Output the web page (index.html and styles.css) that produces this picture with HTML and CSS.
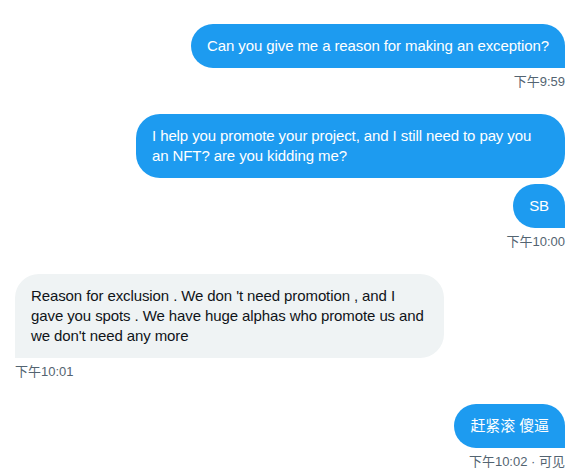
FILE: index.html
```html
<!DOCTYPE html>
<html lang="zh-CN">
<head>
<meta charset="utf-8">
<title>Messages</title>
<link rel="stylesheet" href="styles.css">
</head>
<body>
<div class="chat">
  <div class="group sent">
    <div class="bubble last">Can you give me a reason for making an exception?</div>
    <div class="time">下午9:59</div>
  </div>
  <div class="group sent">
    <div class="bubble">I help you promote your project, and I still need to pay you an NFT? are you kidding me?</div>
    <div class="bubble last">SB</div>
    <div class="time">下午10:00</div>
  </div>
  <div class="group received">
    <div class="bubble last">Reason for exclusion . We don 't need promotion , and I gave you spots . We have huge alphas who promote us and we don't need any more</div>
    <div class="time">下午10:01</div>
  </div>
  <div class="group sent">
    <div class="bubble last">赶紧滚 傻逼</div>
    <div class="time">下午10:02 · 可见</div>
  </div>
</div>
</body>
</html>
```
FILE: styles.css
```css
html, body {
  margin: 0;
  padding: 0;
  background: #ffffff;
}
body {
  font-family: "Liberation Sans", "Noto Sans CJK SC", Arial, sans-serif;
}
.chat {
  display: flex;
  flex-direction: column;
  padding: 24px 13px 0 15px;
}
.group {
  display: flex;
  flex-direction: column;
  gap: 6px;
  padding-bottom: 24px;
}
.group.sent {
  align-items: flex-end;
}
.group.received {
  align-items: flex-start;
}
.bubble {
  max-width: 397px;
  padding: 12px 16px;
  border-radius: 24px;
  font-size: 15px;
  line-height: 20px;
  box-sizing: content-box;
}
.sent .bubble {
  background: #1d9bf0;
  color: #ffffff;
  letter-spacing: -0.1px;
}
.sent .bubble.last {
  border-bottom-right-radius: 0;
}
.received .bubble {
  background: #eff3f4;
  color: #0f1419;
  letter-spacing: -0.1px;
}
.received .bubble.last {
  border-bottom-left-radius: 0;
}
.time {
  margin-top: 0;
  font-size: 13px;
  line-height: 16px;
  color: #536471;
}
```
